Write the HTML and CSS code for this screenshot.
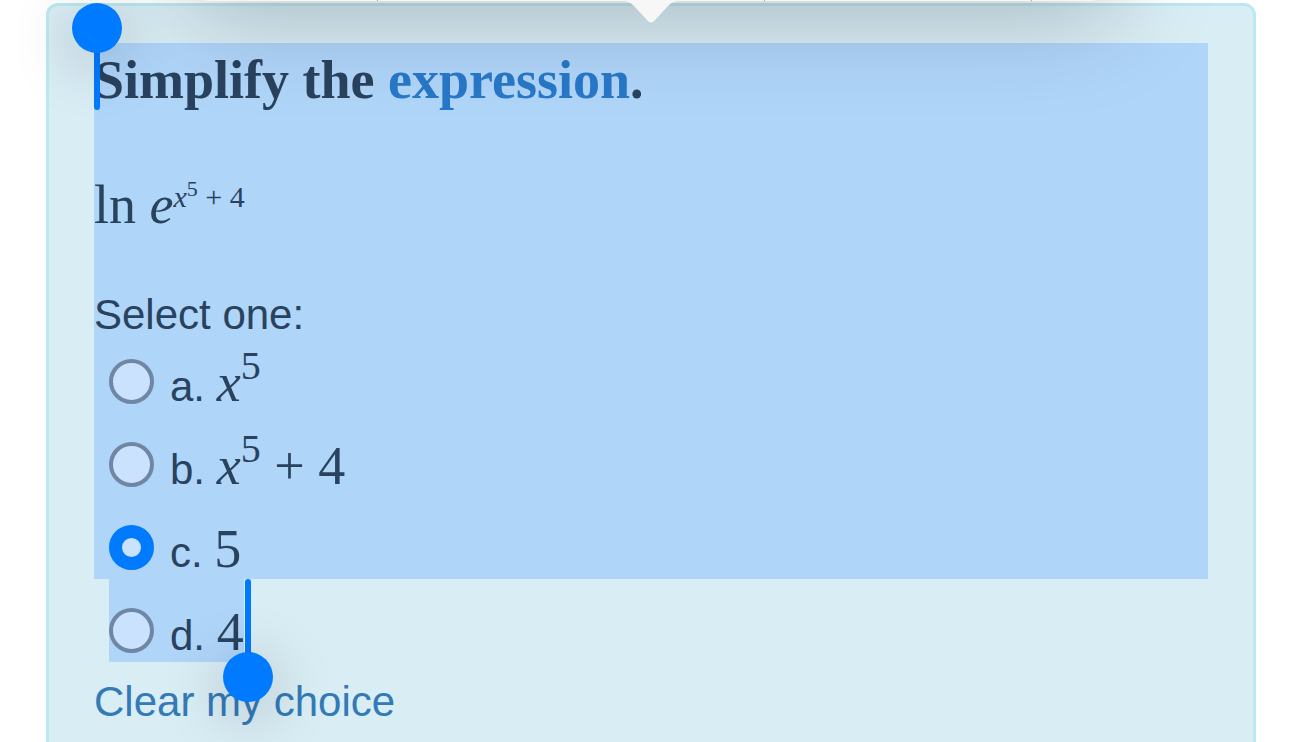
FILE: index.html
```html
<!DOCTYPE html>
<html lang="en">
<head>
    <meta charset="UTF-8">
    <meta name="viewport" content="width=device-width, initial-scale=1.0">
    <title>Simplify the expression</title>
    <link rel="stylesheet" href="styles.css">
</head>
<body>

<div class="popover">
    <div class="popover-menu">
        <span></span>
        <span></span>
        <span></span>
        <span></span>
    </div>
    <svg class="popover-arrow" width="60" height="24" viewBox="0 0 60 24">
        <path d="M0 0 V1 C7 1 10 3 13 6 L26 20 Q30 25 34 20 L47 6 C50 3 53 1 60 1 V0 Z" fill="#f7f7f7"/>
    </svg>
</div>

<form class="question">
    <h2 class="question-title selected">Simplify the <span class="keyword">expression</span>.
        <span class="handle handle-start"></span>
    </h2>

    <p class="formula selected"><span class="math">ln <i>e</i><sup><i>x</i><sup>5</sup> + 4</sup></span></p>

    <fieldset>
        <legend class="selected">Select one:</legend>
        <div class="answer selected">
            <input type="radio" name="answer" id="answerA">
            <label for="answerA">a. <span class="math"><i>x</i><sup class="power">5</sup></span></label>
        </div>
        <div class="answer selected">
            <input type="radio" name="answer" id="answerB">
            <label for="answerB">b. <span class="math"><i>x</i><sup class="power">5</sup> + 4</span></label>
        </div>
        <div class="answer selected">
            <input type="radio" name="answer" id="answerC" checked>
            <label for="answerC">c. <span class="math">5</span></label>
        </div>
        <div class="answer answer-last selected">
            <input type="radio" name="answer" id="answerD">
            <label for="answerD">d. <span class="math">4</span></label>
            <span class="handle handle-end"></span>
        </div>
    </fieldset>

    <a class="clear" href="#">Clear my choice</a>
</form>

</body>
</html>
```
FILE: styles.css
```css
html {
    overflow: hidden;
}
body {
    margin: 0;
    background-color: #fff;
    color: #29425e;
    font-family: "Liberation Sans", Arial, sans-serif;
    font-size: 42px;
    line-height: 52px;
}
.question {
    position: relative;
    box-sizing: border-box;
    min-height: 100vh;
    margin: 3px 34px 0 46px;
    padding: 37px 45px;
    background-color: #d9edf5;
    border: 3px solid #bce8f1;
    border-radius: 12px;
}
.selected {
    background-color: #afd5f9;
}

/* question text */
.question-title {
    position: relative;
    margin: 0;
    padding-bottom: 52px;
    font: bold 54px/74px "Liberation Serif", "Times New Roman", serif;
}
.keyword {
    color: #2878c8;
}
.formula {
    margin: 0;
    padding-bottom: 44px;
    line-height: 72px;
}
.math {
    font-family: "Liberation Serif", "Times New Roman", serif;
    font-size: 54px;
    line-height: 60px;
}
.formula .math {
    line-height: 72px;
}
sup {
    font-size: 30px;
    line-height: 0;
    vertical-align: 16px;
}
sup sup {
    font-size: 22px;
    vertical-align: 11px;
}
.power {
    font-size: 40px;
    vertical-align: 22px;
}

/* answers */
fieldset {
    min-width: 0;
    margin: 0;
    padding: 0;
    border: 0;
}
legend {
    box-sizing: border-box;
    width: 100%;
    padding: 0;
}
.answer {
    display: flex;
    align-items: flex-end;
    height: 72px;
    padding-left: 15px;
}
.answer + .answer {
    padding-top: 11px;
}
.answer-last {
    position: relative;
    width: fit-content;
    margin-left: 15px;
    padding-left: 0;
}
.answer input {
    appearance: none;
    box-sizing: border-box;
    width: 45px;
    height: 45px;
    margin: 0 16px 9px 0;
    background-color: #cbe2ff;
    border: 4px solid #6f87a5;
    border-radius: 50%;
}
.answer input:checked {
    border: 13px solid #007aff;
}
.clear {
    display: inline-block;
    margin-top: 14px;
    color: #337ab7;
    text-decoration: none;
}

/* selection handles */
.handle {
    position: absolute;
    z-index: 2;
    width: 6px;
    background-color: #007aff;
    border-radius: 3px;
}
.handle::after {
    content: "";
    position: absolute;
    left: -22px;
    width: 50px;
    height: 50px;
    background-color: #007aff;
    border-radius: 50%;
    box-shadow: 0 10px 60px rgba(0, 0, 0, 0.25);
}
.handle-start {
    top: 0;
    left: 0;
    height: 67px;
}
.handle-start::after {
    top: -40px;
}
.handle-end {
    top: 0;
    right: -7px;
    height: 76px;
}
.handle-end::after {
    top: 73px;
}

/* edit menu, mostly above the top edge */
.popover {
    position: absolute;
    z-index: 1;
    top: -109px;
    left: 184px;
    right: 174px;
}
.popover-menu {
    display: grid;
    grid-template-columns: 193px 387px 267px 1fr;
    height: 110px;
    background-color: #f7f7f7;
    border-radius: 26px;
    box-shadow: 0 10px 100px rgba(0, 0, 0, 0.25);
}
.popover-menu span + span {
    border-left: 1px solid #a9a9a9;
}
.popover-arrow {
    position: absolute;
    top: 109px;
    left: 50%;
    margin-left: -29px;
}
```
